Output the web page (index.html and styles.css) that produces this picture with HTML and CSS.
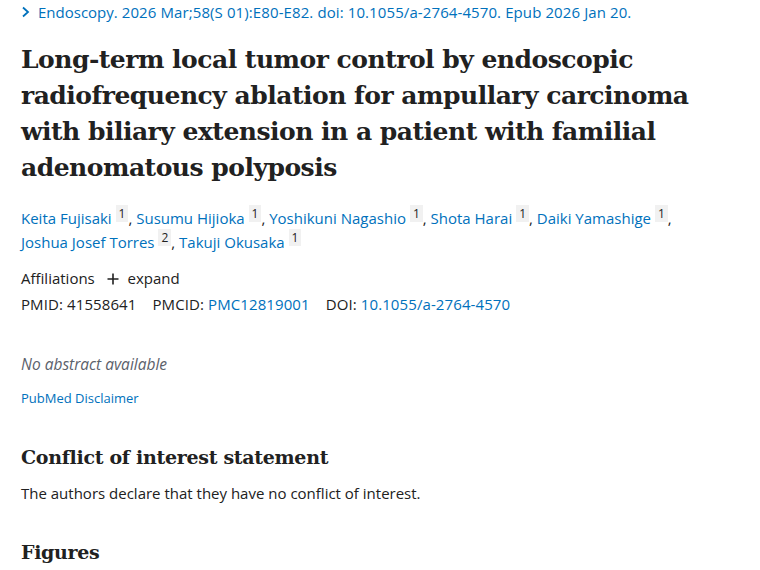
FILE: index.html
```html
<!DOCTYPE html>
<html lang="en">
<head>
  <meta charset="UTF-8">
  <title>Long-term local tumor control - PubMed</title>
  <link rel="stylesheet" href="styles.css">
</head>
<body>
<div class="article">
  <!-- Citation -->
  <div class="cite">
    <svg class="chev" width="10" height="12" viewBox="0 0 10 12"><path d="M2 1.5 L7 6 L2 10.5" fill="none" stroke="#0071bc" stroke-width="1.8"/></svg>
    <a href="#">Endoscopy.</a> <span>2026 Mar;58(S 01):E80-E82. doi: 10.1055/a-2764-4570. Epub 2026 Jan 20.</span>
  </div>

  <h1 class="title">Long-term local tumor control by endoscopic radiofrequency ablation for ampullary carcinoma with biliary extension in a patient with familial adenomatous polyposis</h1>

  <!-- Authors -->
  <div class="authors">
    <a href="#">Keita Fujisaki</a> <sup>1</sup>, <a href="#">Susumu Hijioka</a> <sup>1</sup>, <a href="#">Yoshikuni Nagashio</a> <sup>1</sup>, <a href="#">Shota Harai</a> <sup>1</sup>, <a href="#">Daiki Yamashige</a> <sup>1</sup>,<br>
    <a href="#">Joshua Josef Torres</a> <sup>2</sup>, <a href="#">Takuji Okusaka</a> <sup>1</sup>
  </div>

  <div class="affil">Affiliations <span class="expand"><svg class="plus" width="12" height="12" viewBox="0 0 12 12"><path d="M6 0.5 V11.5 M0.5 6 H11.5" stroke="#212121" stroke-width="1.6"/></svg> expand</span></div>

  <div class="ids">
    <span>PMID: 41558641</span>
    <span>PMCID: <a href="#">PMC12819001</a></span>
    <span>DOI: <a href="#">10.1055/a-2764-4570</a></span>
  </div>

  <p class="no-abstract">No abstract available</p>
  <a class="disclaimer" href="#">PubMed Disclaimer</a>

  <h2 class="section">Conflict of interest statement</h2>
  <p class="body-text">The authors declare that they have no conflict of interest.</p>

  <h2 class="section">Figures</h2>
</div>
</body>
</html>
```

FILE: styles.css
```css
/* Page */
html, body {
  margin: 0;
  padding: 0;
  background: #fff;
  overflow: hidden;
}

body {
  font-family: "Open Sans", "Noto Sans", sans-serif;
  color: #212121;
}

a {
  color: #0071bc;
  text-decoration: none;
}

.article {
  padding: 0 21px;
}

/* Citation line */
.cite {
  font-size: 15px;
  line-height: 24px;
  color: #0071bc;
  display: flex;
  align-items: center;
  white-space: nowrap;
}

.cite .chev {
  margin-right: 7px;
}

.cite span {
  margin-left: 4px;
  letter-spacing: 0.1px;
}

/* Title */
.title {
  font-family: "DejaVu Serif", serif;
  font-weight: bold;
  font-size: 25px;
  line-height: 36px;
  margin: 18px 0 20px;
  letter-spacing: -0.5px;
}

/* Authors */
.authors {
  font-size: 15px;
  line-height: 24px;
}

.authors sup {
  font-size: 12px;
  background: #f1f1f1;
  padding: 0 3px;
  line-height: 1;
  color: #212121;
}

.affil {
  font-size: 15px;
  margin-top: 12px;
  line-height: 24px;
}

.expand {
  margin-left: 8px;
}

.plus {
  margin-right: 5px;
  vertical-align: -1px;
}

.ids {
  font-size: 15px;
  line-height: 24px;
  margin-top: 2px;
  display: flex;
  gap: 16px;
  letter-spacing: 0.1px;
}

.no-abstract {
  font-size: 15.5px;
  font-style: italic;
  color: #5b616b;
  margin: 36px 0 10px;
  line-height: 24px;
}

.disclaimer {
  font-size: 13px;
  line-height: 24px;
  display: block;
}

.section {
  font-family: "DejaVu Serif", serif;
  font-weight: bold;
  font-size: 19px;
  line-height: 28px;
  margin: 33px 0 10px;
  letter-spacing: -0.3px;
}

.body-text {
  font-size: 15px;
  line-height: 24px;
  margin: 0 0 3px;
}
```
